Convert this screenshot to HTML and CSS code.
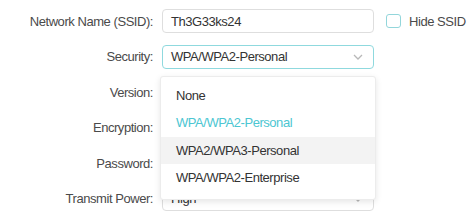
FILE: index.html
```html
<!DOCTYPE html>
<html>
<head>
<meta charset="utf-8">
<link rel="stylesheet" href="styles.css">
</head>
<body>
<div class="form">
  <div class="row">
    <div class="label">Network Name (SSID):</div>
    <div class="field">Th3G33ks24</div>
    <label class="check"><span class="box"></span><span>Hide SSID</span></label>
  </div>
  <div class="row">
    <div class="label">Security:</div>
    <div class="field select active">
      <span>WPA/WPA2-Personal</span>
      <svg class="chev" width="10" height="6" viewBox="0 0 10 6"><path d="M1 1 L5 5 L9 1" fill="none" stroke="#b8b8b8" stroke-width="1.3"/></svg>
      <ul class="menu">
        <li>None</li>
        <li class="sel">WPA/WPA2-Personal</li>
        <li class="hover">WPA2/WPA3-Personal</li>
        <li>WPA/WPA2-Enterprise</li>
      </ul>
    </div>
  </div>
  <div class="row">
    <div class="label">Version:</div>
    <div class="field"></div>
  </div>
  <div class="row">
    <div class="label">Encryption:</div>
    <div class="field"></div>
  </div>
  <div class="row">
    <div class="label">Password:</div>
    <div class="field"></div>
  </div>
  <div class="row">
    <div class="label">Transmit Power:</div>
    <div class="field select">
      <span>High</span>
      <svg class="chev" width="10" height="6" viewBox="0 0 10 6"><path d="M1 1 L5 5 L9 1" fill="none" stroke="#b8b8b8" stroke-width="1.3"/></svg>
    </div>
  </div>
</div>
</body>
</html>
```
FILE: styles.css
```css
html, body {
  margin: 0;
  padding: 0;
  background: #fff;
}
body {
  font-family: "Liberation Sans", Arial, sans-serif;
  font-size: 13px;
  letter-spacing: -0.45px;
  color: #333;
  width: 474px;
  height: 217px;
  overflow: hidden;
}
.form {
  display: flex;
  flex-direction: column;
  gap: 11.5px;
  padding-top: 9px;
}
.row {
  display: flex;
  align-items: center;
  height: 24px;
}
.label {
  width: 153px;
  margin-right: 9px;
  text-align: right;
  color: #4a4a4a;
}
.field {
  position: relative;
  box-sizing: border-box;
  width: 212px;
  height: 24px;
  border: 1px solid #dedede;
  border-radius: 4px;
  padding: 0 8px;
  display: flex;
  align-items: center;
  justify-content: space-between;
  color: #333;
}
.field.active {
  border-color: #8fd9de;
}
.chev {
  margin-right: 2px;
}
.check {
  display: flex;
  align-items: center;
  gap: 8px;
  margin-left: 12px;
  color: #4a4a4a;
}
.box {
  box-sizing: border-box;
  width: 15px;
  height: 14px;
  border: 1.5px solid #93d6db;
  border-radius: 3px;
}
.menu {
  position: absolute;
  left: -3px;
  top: 30px;
  width: 216px;
  box-sizing: border-box;
  margin: 0;
  padding: 5px 0 7px;
  list-style: none;
  background: #fff;
  border: 1px solid #ececec;
  border-radius: 3px;
  box-shadow: 0 2px 6px rgba(0, 0, 0, 0.10);
  z-index: 5;
}
.menu li {
  height: 27.5px;
  line-height: 27.5px;
  padding-left: 15px;
  color: #333;
}
.menu li.sel {
  color: #4cc6d2;
}
.menu li.hover {
  background: #f3f3f3;
}
```
